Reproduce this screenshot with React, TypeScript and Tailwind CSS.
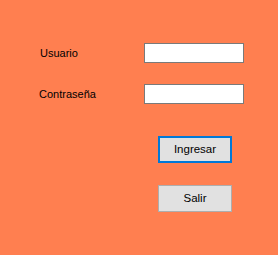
import React from 'react';

const App: React.FC = () => {
    return (
        <div
            className="w-[278px] h-[255px] bg-[#FF7F50] text-[11px] text-black"
            style={{ fontFamily: '"Liberation Sans", Arial, sans-serif' }}
        >
            <div className="flex flex-col pt-[43px] pl-[40px] gap-[21px]">
                <div className="flex items-center">
                    <span className="w-[104px]">Usuario</span>
                    <input className="w-[100px] h-[20px] bg-white border border-[#7a7a7a] outline-none" />
                </div>
                <div className="flex items-center">
                    <span className="w-[104px] -ml-px">Contraseña</span>
                    <input type="password" className="w-[100px] h-[20px] bg-white border border-[#7a7a7a] outline-none ml-px" />
                </div>
            </div>
            <div className="flex flex-col pl-[158px] pt-[32px] gap-[22px]">
                <button className="w-[74px] h-[27px] bg-[#e1e1e1] border-2 border-[#0078d7] text-[11.5px]">
                    Ingresar
                </button>
                <button className="w-[74px] h-[27px] bg-[#e1e1e1] border border-[#adadad] text-[11.5px]">
                    Salir
                </button>
            </div>
        </div>
    );
};

export default App;
